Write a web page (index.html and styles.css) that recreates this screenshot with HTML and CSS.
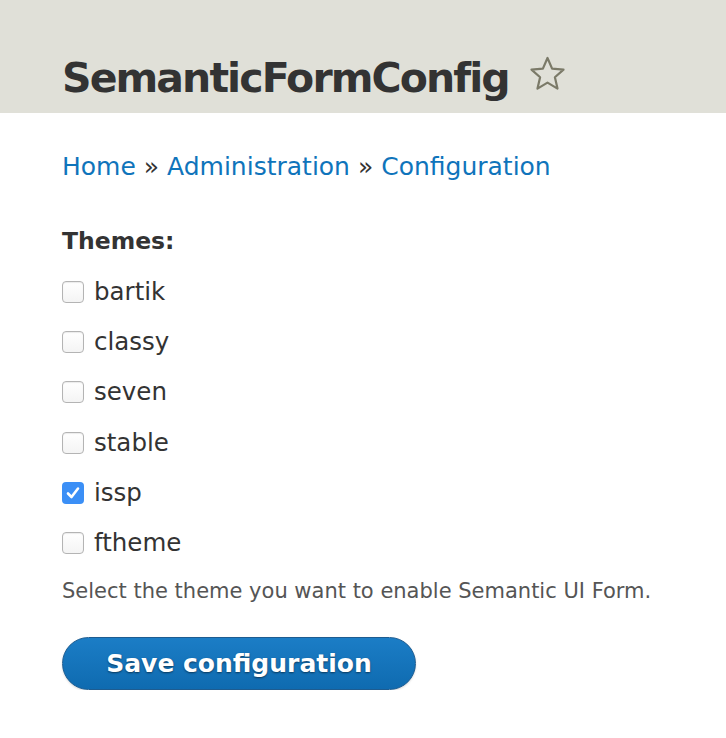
FILE: index.html
```html
<!DOCTYPE html>
<html>
<head>
<meta charset="utf-8">
<link rel="stylesheet" href="styles.css">
</head>
<body>
<header class="page-header">
  <h1 class="page-title">SemanticFormConfig</h1>
  <svg class="star" width="37" height="35" viewBox="0 0 37 35" aria-hidden="true">
    <path d="M18.5 2 L23.1 12.6 L34.5 13.6 L25.9 21.2 L28.5 32.6 L18.5 26.6 L8.5 32.6 L11.1 21.2 L2.5 13.6 L13.9 12.6 Z" fill="none" stroke="#7b7a68" stroke-width="2.2" stroke-linejoin="round"/>
  </svg>
</header>
<main class="content">
  <nav class="breadcrumb">
    <a href="#">Home</a> <span class="sep">»</span> <a href="#">Administration</a> <span class="sep">»</span> <a href="#">Configuration</a>
  </nav>
  <form class="form">
    <div class="field-label">Themes:</div>
    <ul class="options">
      <li class="option"><span class="box"></span><span class="opt-label">bartik</span></li>
      <li class="option"><span class="box"></span><span class="opt-label">classy</span></li>
      <li class="option"><span class="box"></span><span class="opt-label">seven</span></li>
      <li class="option"><span class="box"></span><span class="opt-label">stable</span></li>
      <li class="option"><span class="box checked"><svg width="22" height="22" viewBox="0 0 22 22"><path d="M6 11.5 L9.5 15 L16 6.5" fill="none" stroke="#fff" stroke-width="2.6" stroke-linecap="round" stroke-linejoin="round"/></svg></span><span class="opt-label">issp</span></li>
      <li class="option"><span class="box"></span><span class="opt-label">ftheme</span></li>
    </ul>
    <p class="description">Select the theme you want to enable Semantic UI Form.</p>
    <button type="button" class="btn">Save configuration</button>
  </form>
</main>
</body>
</html>
```

FILE: styles.css
```css
html, body {
  margin: 0;
  padding: 0;
  background: #fff;
  font-family: "DejaVu Sans", "Liberation Sans", sans-serif;
  color: #333;
}
.page-header {
  background: #e0e0d8;
  height: 113px;
  display: flex;
  align-items: flex-end;
  padding-left: 62px;
  box-sizing: border-box;
  gap: 20px;
}
.page-title {
  margin: 0 0 14px;
  font-size: 41px;
  font-weight: bold;
  color: #333;
  letter-spacing: -1.9px;
  line-height: 41px;
}
.star {
  display: block;
  margin-bottom: 22px;
}
.content {
  padding: 0 62px;
}
.breadcrumb {
  margin-top: 38px;
  font-size: 25px;
  line-height: 32px;
  color: #333;
}
.breadcrumb a {
  color: #0f74bb;
  text-decoration: none;
}
.breadcrumb .sep {
  color: #333;
}
.form {
  margin-top: 43px;
}
.field-label {
  font-size: 23.5px;
  font-weight: bold;
  line-height: 30px;
  color: #333;
}
.options {
  list-style: none;
  margin: 21px 0 0;
  padding: 0;
  display: flex;
  flex-direction: column;
  gap: 20.2px;
}
.option {
  display: flex;
  align-items: center;
  height: 30px;
  gap: 10px;
}
.box {
  width: 20px;
  height: 20px;
  border: 1px solid #b4b4b4;
  border-radius: 4px;
  background: linear-gradient(#fff, #f4f4f4);
  box-shadow: inset 0 1px 1px rgba(0,0,0,0.08);
  display: block;
  flex: none;
}
.box.checked {
  width: 22px;
  height: 22px;
  border: none;
  background: #3b8ff6;
  box-shadow: none;
}
.box.checked svg {
  display: block;
}
.opt-label {
  font-size: 24.5px;
  color: #333;
  line-height: 30px;
}
.description {
  margin: 19px 0 0;
  font-size: 21px;
  line-height: 28px;
  color: #555;
}
.btn {
  display: block;
  margin-top: 32px;
  width: 354px;
  height: 53px;
  border-radius: 27px;
  border: 1px solid #1e5c90;
  background: linear-gradient(#1b7dc6, #0f6bb0);
  color: #fff;
  font-family: "DejaVu Sans", sans-serif;
  font-size: 25px;
  font-weight: bold;
  text-shadow: 0 1px 2px rgba(0,0,0,0.5);
  box-shadow: 0 1px 2px rgba(0,0,0,0.15);
  padding: 0;
  cursor: pointer;
}
```
